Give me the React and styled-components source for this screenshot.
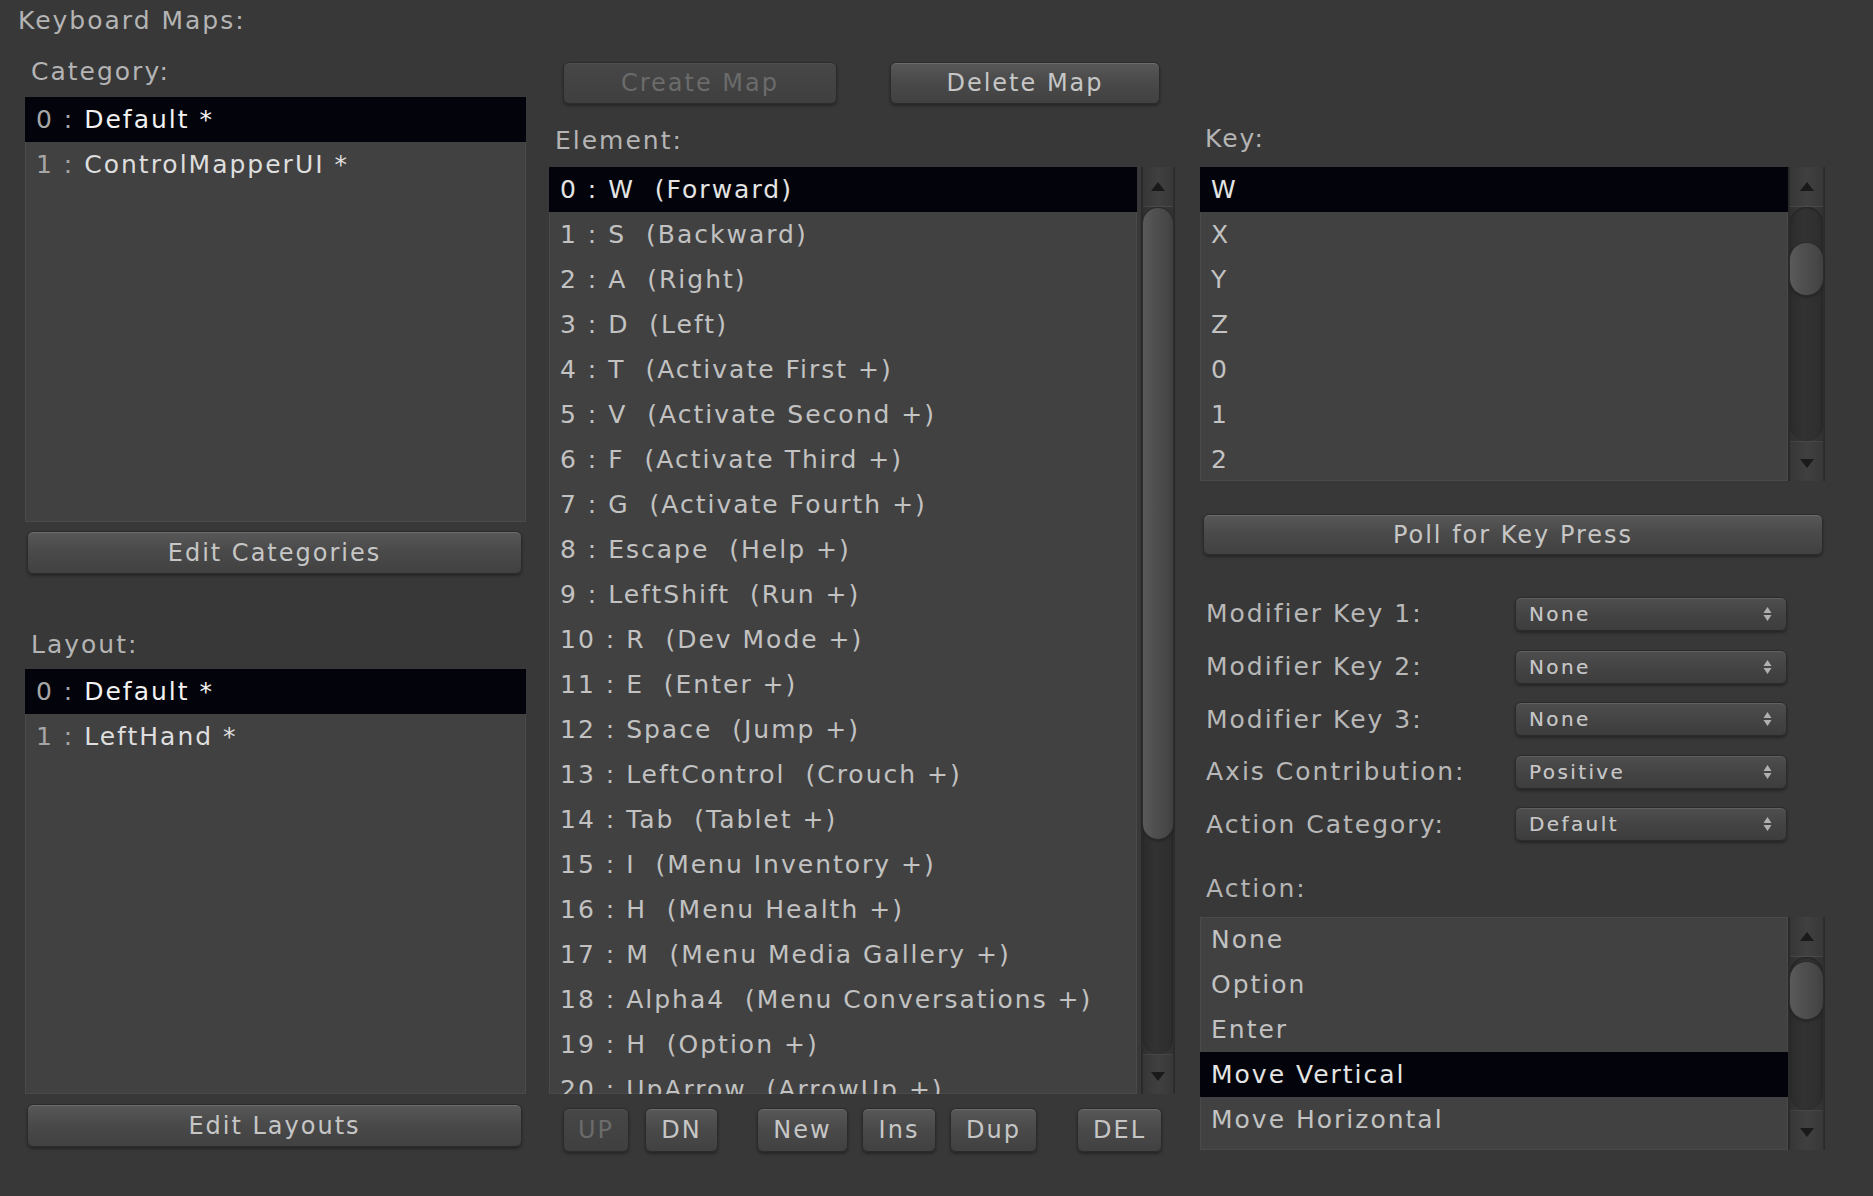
import React from 'react';
import styled, { createGlobalStyle } from 'styled-components';

const GlobalStyle = createGlobalStyle`
  html, body { margin: 0; padding: 0; background: #383838; }
  body { font-family: "DejaVu Sans", Verdana, sans-serif; }
`;

const Page = styled.div`
  width: 1873px;
  height: 1196px;
  box-sizing: border-box;
  padding-top: 6px;
  background: #383838;
  color: #c2c2c2;
  font-size: 25px;
  letter-spacing: 2px;
  overflow: hidden;
`;

const Title = styled.div`
  height: 30px;
  line-height: 30px;
  padding-left: 18px;
  color: #b4b4b4;
`;

const Columns = styled.div`
  display: flex;
  align-items: flex-start;
  padding-left: 25px;
`;

const Column = styled.div`
  display: flex;
  flex-direction: column;
  flex-shrink: 0;
  width: ${(p) => p.$w}px;
  margin-left: ${(p) => p.$ml || 0}px;
`;

const Label = styled.div`
  height: 30px;
  line-height: 30px;
  padding-left: ${(p) => (p.$pl == null ? 6 : p.$pl)}px;
  margin-top: ${(p) => p.$mt || 0}px;
  color: #b4b4b4;
  white-space: pre;
`;

const ListFrame = styled.div`
  display: flex;
  height: ${(p) => p.$h}px;
  margin-top: ${(p) => p.$mt || 0}px;
  gap: ${(p) => p.$gap || 0}px;
`;

const ListBox = styled.div`
  box-sizing: border-box;
  width: ${(p) => (p.$w ? `${p.$w}px` : '100%')};
  height: ${(p) => (p.$h ? `${p.$h}px` : '100%')};
  margin-top: ${(p) => p.$mt || 0}px;
  background: #414141;
  box-shadow: inset 0 0 0 1px #4a4a4a;
  overflow: hidden;
  flex-shrink: 0;
`;

const Row = styled.div`
  height: 45px;
  line-height: 45px;
  padding-left: 11px;
  white-space: pre;
  color: ${(p) => (p.$sel ? '#e4e4e4' : '#c2c2c2')};
  background: ${(p) => (p.$sel ? '#03040b' : 'transparent')};
`;

const Idx = styled.span`
  color: #a6a6a6;
`;

const Name = styled.span`
  color: ${(p) => (p.$sel ? '#f2f2f2' : '#dedede')};
`;

const Button = styled.button`
  box-sizing: border-box;
  flex-shrink: 0;
  width: ${(p) => p.$w}px;
  height: ${(p) => p.$h || 42}px;
  margin: ${(p) => p.$m || '0'};
  padding: 0;
  font-family: inherit;
  font-size: 24px;
  letter-spacing: 2px;
  color: ${(p) => (p.disabled ? '#6b6b6b' : '#c6c6c6')};
  background: ${(p) =>
    p.disabled
      ? 'linear-gradient(#474747, #3f3f3f)'
      : 'linear-gradient(#585858, #4a4a4a 45%, #414141)'};
  border: 1px solid #2b2b2b;
  border-radius: 6px;
  box-shadow: inset 0 1px 0 ${(p) => (p.disabled ? 'rgba(255,255,255,0.05)' : 'rgba(255,255,255,0.13)')},
    0 2px 3px rgba(0, 0, 0, 0.35);
  cursor: default;
`;

const ButtonRow = styled.div`
  display: flex;
  align-items: center;
  padding-left: 14px;
  margin-top: ${(p) => p.$mt || 0}px;
`;

const ScrollCol = styled.div`
  box-sizing: border-box;
  width: ${(p) => p.$w}px;
  height: 100%;
  flex-shrink: 0;
  display: flex;
  flex-direction: column;
  align-items: stretch;
  padding: 0 2px;
  background: linear-gradient(to right, #272727 0, #303030 3px, #3a3a3a 50%, #323232 calc(100% - 3px), #2a2a2a 100%);
`;

const ArrowCell = styled.div`
  height: 40px;
  flex-shrink: 0;
  display: flex;
  align-items: center;
  justify-content: center;
  box-sizing: border-box;
  padding-top: ${(p) => (p.$down ? 4 : 0)}px;
  background: linear-gradient(to right, #363636, #404040 50%, #383838);
  ${(p) =>
    p.$down
      ? 'border-top: 1px solid rgba(255,255,255,0.05);'
      : 'border-bottom: 1px solid rgba(255,255,255,0.07);'}
`;

const Groove = styled.div`
  flex: 1;
  border-radius: 16px;
  background: linear-gradient(to right, #2b2b2b, #323232 40%, #2f2f2f 80%, #2b2b2b);
  box-shadow: inset 0 1px 2px rgba(0, 0, 0, 0.35);
  display: flex;
  flex-direction: column;
`;

const Thumb = styled.div`
  flex-shrink: 0;
  border-radius: 999px;
  background: linear-gradient(to right, #5a5a5a, #505050 35%, #474747 80%, #404040);
  box-shadow: 0 0 0 1px #2c2c2c, 0 2px 3px rgba(0, 0, 0, 0.35);
`;

const Tri = ({ down }) => (
  <svg width="16" height="11" viewBox="0 0 16 11">
    <path d={down ? 'M1 1 H15 L8 10 Z' : 'M1 10 H15 L8 1 Z'} fill="#1a1a1a" />
  </svg>
);

const Scrollbar = ({ w, thumbTop, thumbH }) => (
  <ScrollCol $w={w}>
    <ArrowCell>
      <Tri />
    </ArrowCell>
    <Groove>
      <Thumb style={{ marginTop: thumbTop, height: thumbH }} />
    </Groove>
    <ArrowCell $down>
      <Tri down />
    </ArrowCell>
  </ScrollCol>
);

const FormGrid = styled.div`
  display: grid;
  grid-template-columns: 315px 272px;
  grid-auto-rows: 52.6px;
  align-items: center;
  margin-top: 32.7px;
`;

const FormLabel = styled.div`
  padding-left: 6px;
  color: #b8b8b8;
  white-space: pre;
`;

const Select = styled.div`
  box-sizing: border-box;
  width: 272px;
  height: 34px;
  display: flex;
  align-items: center;
  justify-content: space-between;
  padding: 0 14px 0 13px;
  border: 1px solid #2b2b2b;
  border-radius: 6px;
  background: linear-gradient(#4e4e4e, #444 50%, #3d3d3d);
  box-shadow: inset 0 1px 0 rgba(255, 255, 255, 0.1), 0 2px 3px rgba(0, 0, 0, 0.35);
  font-size: 20px;
  letter-spacing: 2.4px;
  color: #c4c4c4;
  text-shadow: 0 0 0.6px rgba(220, 220, 220, 0.6);
`;

const UpDown = () => (
  <svg width="9" height="16" viewBox="0 0 9 16">
    <path d="M0.5 7 H8.5 L4.5 1 Z" fill="#b0b0b0" />
    <path d="M0.5 9 H8.5 L4.5 15 Z" fill="#b0b0b0" />
  </svg>
);

const elements = [
  '0 : W  (Forward)',
  '1 : S  (Backward)',
  '2 : A  (Right)',
  '3 : D  (Left)',
  '4 : T  (Activate First +)',
  '5 : V  (Activate Second +)',
  '6 : F  (Activate Third +)',
  '7 : G  (Activate Fourth +)',
  '8 : Escape  (Help +)',
  '9 : LeftShift  (Run +)',
  '10 : R  (Dev Mode +)',
  '11 : E  (Enter +)',
  '12 : Space  (Jump +)',
  '13 : LeftControl  (Crouch +)',
  '14 : Tab  (Tablet +)',
  '15 : I  (Menu Inventory +)',
  '16 : H  (Menu Health +)',
  '17 : M  (Menu Media Gallery +)',
  '18 : Alpha4  (Menu Conversations +)',
  '19 : H  (Option +)',
  '20 : UpArrow  (ArrowUp +)',
];

const keys = ['W', 'X', 'Y', 'Z', '0', '1', '2'];
const actions = ['None', 'Option', 'Enter', 'Move Vertical', 'Move Horizontal'];

const formRows = [
  ['Modifier Key 1:', 'None'],
  ['Modifier Key 2:', 'None'],
  ['Modifier Key 3:', 'None'],
  ['Axis Contribution:', 'Positive'],
  ['Action Category:', 'Default'],
];

const NamedList = ({ items, h, mt }) => (
  <ListBox $h={h} $mt={mt}>
    {items.map((name, i) => (
      <Row key={name} $sel={i === 0}>
        <Idx>{i} : </Idx>
        <Name $sel={i === 0}>{name}</Name>
      </Row>
    ))}
  </ListBox>
);

export default function App() {
  return (
    <>
      <GlobalStyle />
      <Page>
        <Title>Keyboard Maps:</Title>
        <Columns>
          <Column $w={501}>
            <Label $mt={21}>Category:</Label>
            <NamedList items={['Default *', 'ControlMapperUI *']} h={425} mt={10} />
            <Button $w={495} $h={43} $m="9px 0 0 2px">Edit Categories</Button>
            <Label $mt={56}>Layout:</Label>
            <NamedList items={['Default *', 'LeftHand *']} h={425} mt={9} />
            <Button $w={495} $h={43} $m="10px 0 0 2px">Edit Layouts</Button>
          </Column>

          <Column $w={626} $ml={23}>
            <ButtonRow $mt={26}>
              <Button $w={274} disabled>Create Map</Button>
              <Button $w={270} $m="0 0 0 53px">Delete Map</Button>
            </ButtonRow>
            <Label $mt={22}>Element:</Label>
            <ListFrame $h={927} $mt={11} $gap={4}>
              <ListBox $w={588}>
                {elements.map((e, i) => (
                  <Row key={e} $sel={i === 0}>{e}</Row>
                ))}
              </ListBox>
              <Scrollbar w={34} thumbTop={1} thumbH={631} />
            </ListFrame>
            <ButtonRow $mt={14}>
              <Button $w={66} $h={44} disabled>UP</Button>
              <Button $w={73} $h={44} $m="0 0 0 16px">DN</Button>
              <Button $w={91} $h={44} $m="0 0 0 39px">New</Button>
              <Button $w={74} $h={44} $m="0 0 0 14px">Ins</Button>
              <Button $w={87} $h={44} $m="0 0 0 14px">Dup</Button>
              <Button $w={85} $h={44} $m="0 0 0 40px">DEL</Button>
            </ButtonRow>
          </Column>

          <Column $w={625} $ml={25}>
            <Label $mt={88} $pl={5}>Key:</Label>
            <ListFrame $h={314} $mt={13}>
              <ListBox $w={588}>
                {keys.map((k, i) => (
                  <Row key={k} $sel={i === 0}>{k}</Row>
                ))}
              </ListBox>
              <Scrollbar w={37} thumbTop={36} thumbH={52} />
            </ListFrame>
            <Button $w={620} $h={41} $m="33px 0 0 3px">Poll for Key Press</Button>
            <FormGrid>
              {formRows.map(([l, v]) => (
                <React.Fragment key={l}>
                  <FormLabel>{l}</FormLabel>
                  <Select>
                    <span>{v}</span>
                    <UpDown />
                  </Select>
                </React.Fragment>
              ))}
            </FormGrid>
            <Label $mt={23} $pl={6}>Action:</Label>
            <ListFrame $h={233} $mt={13}>
              <ListBox $w={588}>
                {actions.map((a, i) => (
                  <Row key={a} $sel={i === 3}>{a}</Row>
                ))}
              </ListBox>
              <Scrollbar w={37} thumbTop={5} thumbH={57} />
            </ListFrame>
          </Column>
        </Columns>
      </Page>
    </>
  );
}
